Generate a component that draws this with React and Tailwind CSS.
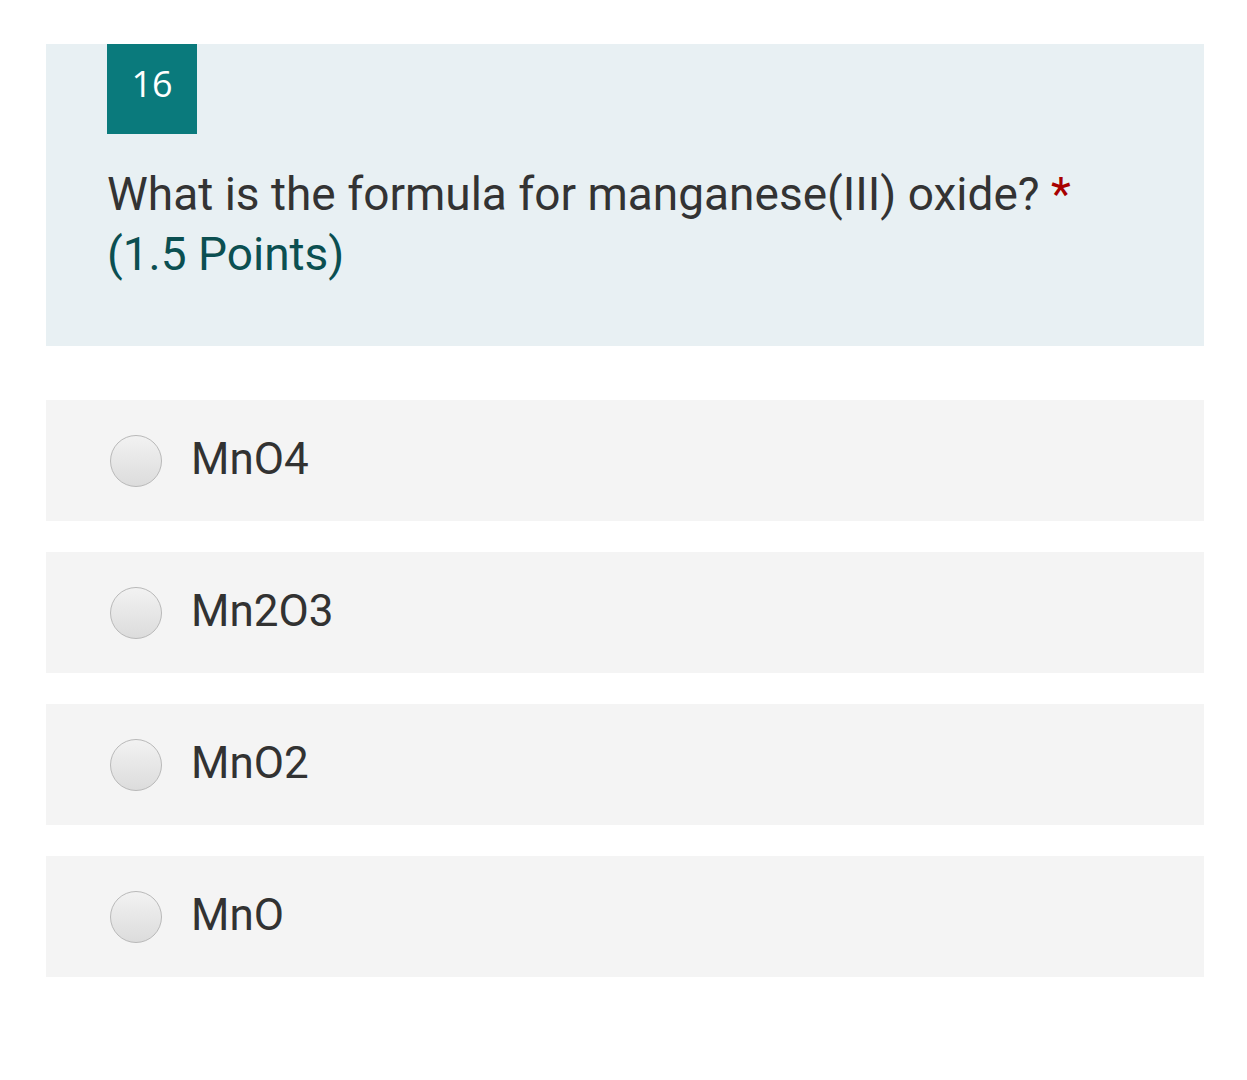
import React from 'react';

const options = ['MnO4', 'Mn2O3', 'MnO2', 'MnO'];

const Radio = () => (
    <span className="block w-[52px] h-[52px] rounded-full border border-[#b9b9b9] bg-gradient-to-b from-[#f2f2f2] to-[#dcdcdc] shrink-0" />
);

const App = () => {
    return (
        <div className="min-h-screen bg-white pt-[44px] pl-[46px] pr-[43px] pb-10" style={{ fontFamily: 'Roboto, "Noto Sans", sans-serif' }}>
            <div className="bg-[#e8f0f3] pl-[61px] pr-10 pb-[62px]">
                <div className="w-[90px] h-[90px] bg-[#0a7a7c] flex items-center justify-center pb-[10px] text-white text-[36px]" style={{ fontFamily: '"Open Sans", Roboto, sans-serif' }}>
                    16
                </div>
                <div className="mt-[30px] text-[46px] leading-[60px] text-[#333333]">
                    What is the formula for manganese(III) oxide? <span className="text-[#a80000]">*</span>
                    <div className="text-[#0b4f51]">(1.5 Points)</div>
                </div>
            </div>

            <div className="mt-[54px] flex flex-col gap-[31px]">
                {options.map((opt) => (
                    <div key={opt} className="h-[121px] bg-[#f4f4f4] flex items-center pl-[64px] gap-[29px]">
                        <Radio />
                        <span className="text-[44px] text-[#323232] pb-1">{opt}</span>
                    </div>
                ))}
            </div>
        </div>
    );
};

export default App;
